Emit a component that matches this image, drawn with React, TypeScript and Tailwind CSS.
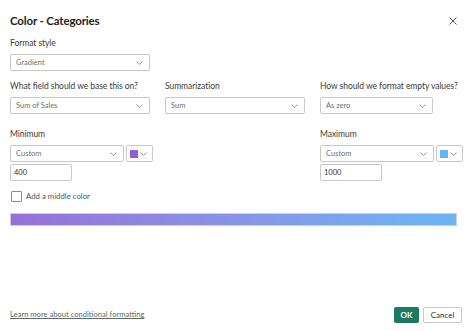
import React from "react";

const Chevron = () => (
  <svg width="7" height="4" viewBox="0 0 7 4" fill="none" className="shrink-0">
    <path d="M0.6 0.6 L3.5 3.3 L6.4 0.6" stroke="#7a7a7a" strokeWidth="0.8" />
  </svg>
);

const Select = ({ value, w }: { value: string; w: string }) => (
  <div className={`${w} shrink-0 h-[17px] border border-[#c8c8c8] rounded-[2px] flex items-center justify-between pl-[5px] pr-[6px] bg-white`}>
    <span className="text-[7.5px] text-[#707070] leading-none">{value}</span>
    <Chevron />
  </div>
);

const ColorBtn = ({ color }: { color: string }) => (
  <div className="w-[27px] shrink-0 h-[17px] border border-[#c8c8c8] rounded-[2px] flex items-center justify-between pl-[3px] pr-[5px] bg-white">
    <div className="w-[8px] h-[8px]" style={{ background: color }} />
    <Chevron />
  </div>
);

const Label = ({ children }: { children: React.ReactNode }) => (
  <div className="text-[8.5px] tracking-[-0.05px] leading-[12px] text-[#3b3b3b] h-[12px] whitespace-nowrap">{children}</div>
);

const Input = ({ value, w }: { value: string; w: string }) => (
  <div className={`${w} h-[17px] border border-[#c8c8c8] rounded-[2px] flex items-center pl-[3px] bg-white`}>
    <span className="text-[7.5px] text-[#333] leading-none">{value}</span>
  </div>
);

export default function App() {
  return (
    <div className="w-[474px] h-[331px] bg-white flex flex-col px-[10px] font-['Lato','Open_Sans',sans-serif] overflow-hidden">
      <div className="flex items-center justify-between mt-[13px] h-[16px]">
        <div className="text-[11.5px] tracking-[-0.15px] font-bold text-[#252423] leading-[16px]">Color - Categories</div>
        <svg width="8" height="8" viewBox="0 0 8 8" className="mr-[7px]">
          <path d="M0.5 0.5 L7.5 7.5 M7.5 0.5 L0.5 7.5" stroke="#444" strokeWidth="0.9" />
        </svg>
      </div>

      <div className="mt-[8px]">
        <Label>Format style</Label>
        <div className="mt-[5px]">
          <Select value="Gradient" w="w-[140px]" />
        </div>
      </div>

      <div className="mt-[9px] flex">
        <div className="w-[155px] shrink-0">
          <Label>What field should we base this on?</Label>
          <div className="mt-[5px]"><Select value="Sum of Sales" w="w-[140px]" /></div>
        </div>
        <div className="w-[155px] shrink-0">
          <Label>Summarization</Label>
          <div className="mt-[5px]"><Select value="Sum" w="w-[140px]" /></div>
        </div>
        <div className="flex-1">
          <Label>How should we format empty values?</Label>
          <div className="mt-[5px]"><Select value="As zero" w="w-[113px]" /></div>
        </div>
      </div>

      <div className="mt-[14px] flex">
        <div className="w-[310px] shrink-0">
          <Label>Minimum</Label>
          <div className="mt-[5px] flex gap-[2px]">
            <Select value="Custom" w="w-[114px]" />
            <ColorBtn color="#8a63d2" />
          </div>
          <div className="mt-[2px]"><Input value="400" w="w-[62px]" /></div>
        </div>
        <div className="flex-1">
          <Label>Maximum</Label>
          <div className="mt-[5px] flex gap-[2px]">
            <Select value="Custom" w="w-[114px]" />
            <ColorBtn color="#64b5f6" />
          </div>
          <div className="mt-[2px]"><Input value="1000" w="w-[62px]" /></div>
        </div>
      </div>

      <div className="mt-[10px] flex items-center gap-[4px] ml-[1px]">
        <div className="w-[11px] h-[11px] border border-[#8a8a8a] rounded-[1px] bg-white" />
        <span className="text-[7.8px] font-normal text-[#555] leading-none">Add a middle color</span>
      </div>

      <div className="mt-[11px] h-[13px] w-[447px] bg-gradient-to-r from-[#9670d8] to-[#6ab6f6] border border-[#d0d0d0]" />

      <div className="mt-auto mb-[8px] flex items-center justify-between">
        <a className="text-[7.6px] font-normal text-[#5a6b69] underline leading-none">Learn more about conditional formatting</a>
        <div className="flex gap-[4px] mr-[2px]">
          <div className="w-[25px] h-[16px] rounded-[2px] bg-[#1c7a60] flex items-center justify-center text-white text-[8px] font-bold">OK</div>
          <div className="w-[39px] h-[16px] rounded-[2px] border border-[#c8c8c8] bg-white flex items-center justify-center text-[#333] text-[8px]">Cancel</div>
        </div>
      </div>
    </div>
  );
}
